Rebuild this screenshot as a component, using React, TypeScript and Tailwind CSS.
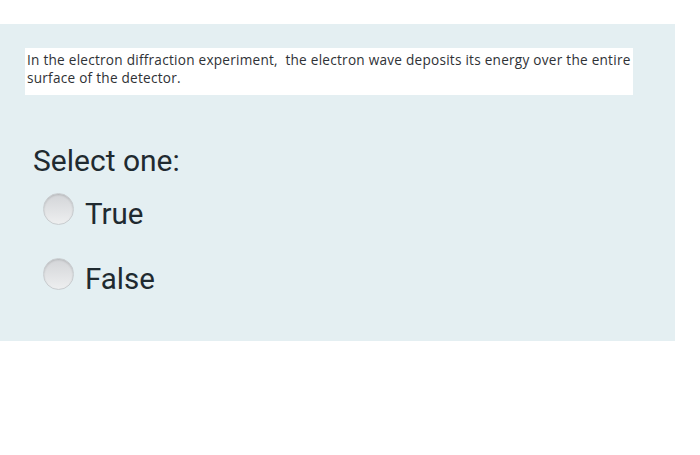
import React from "react";

function Radio() {
  return (
    <span className="block w-[31px] h-[32px] rounded-full border border-[#c9cdd0] bg-gradient-to-b from-[#d3d5d8] to-[#eeeff0] shadow-[inset_0_1px_2px_rgba(0,0,0,0.15)] shrink-0" />
  );
}

export default function App() {
  const options = ["True", "False"];
  return (
    <div className="w-[700px] h-[455px] bg-white pt-[24px]">
      <div className="w-[675px] h-[317px] bg-[#e4eff2] pt-[24px]">
        <div className="ml-[25px] w-[608px] h-[47px] bg-white px-[2px] pt-[3px] text-[13.6px] leading-[18px] tracking-[0.25px] text-[#2f3236] font-['Open_Sans',sans-serif]">
          In the electron diffraction experiment,&nbsp; the electron wave deposits its energy over the entire
          <br />
          surface of the detector.
        </div>
        <div className="ml-[33px] mt-[48px] text-[30px] leading-[36px] text-[#1f2a30] font-['Roboto',sans-serif]">
          Select one:
        </div>
        <div className="ml-[43px] mt-[14px] flex flex-col gap-[32px]">
          {options.map((o) => (
            <label key={o} className="flex items-start gap-[11px] h-[33px]">
              <Radio />
              <span className="mt-[3px] text-[29.5px] leading-[36px] text-[#1f2a30] font-['Roboto',sans-serif]">{o}</span>
            </label>
          ))}
        </div>
      </div>
    </div>
  );
}
